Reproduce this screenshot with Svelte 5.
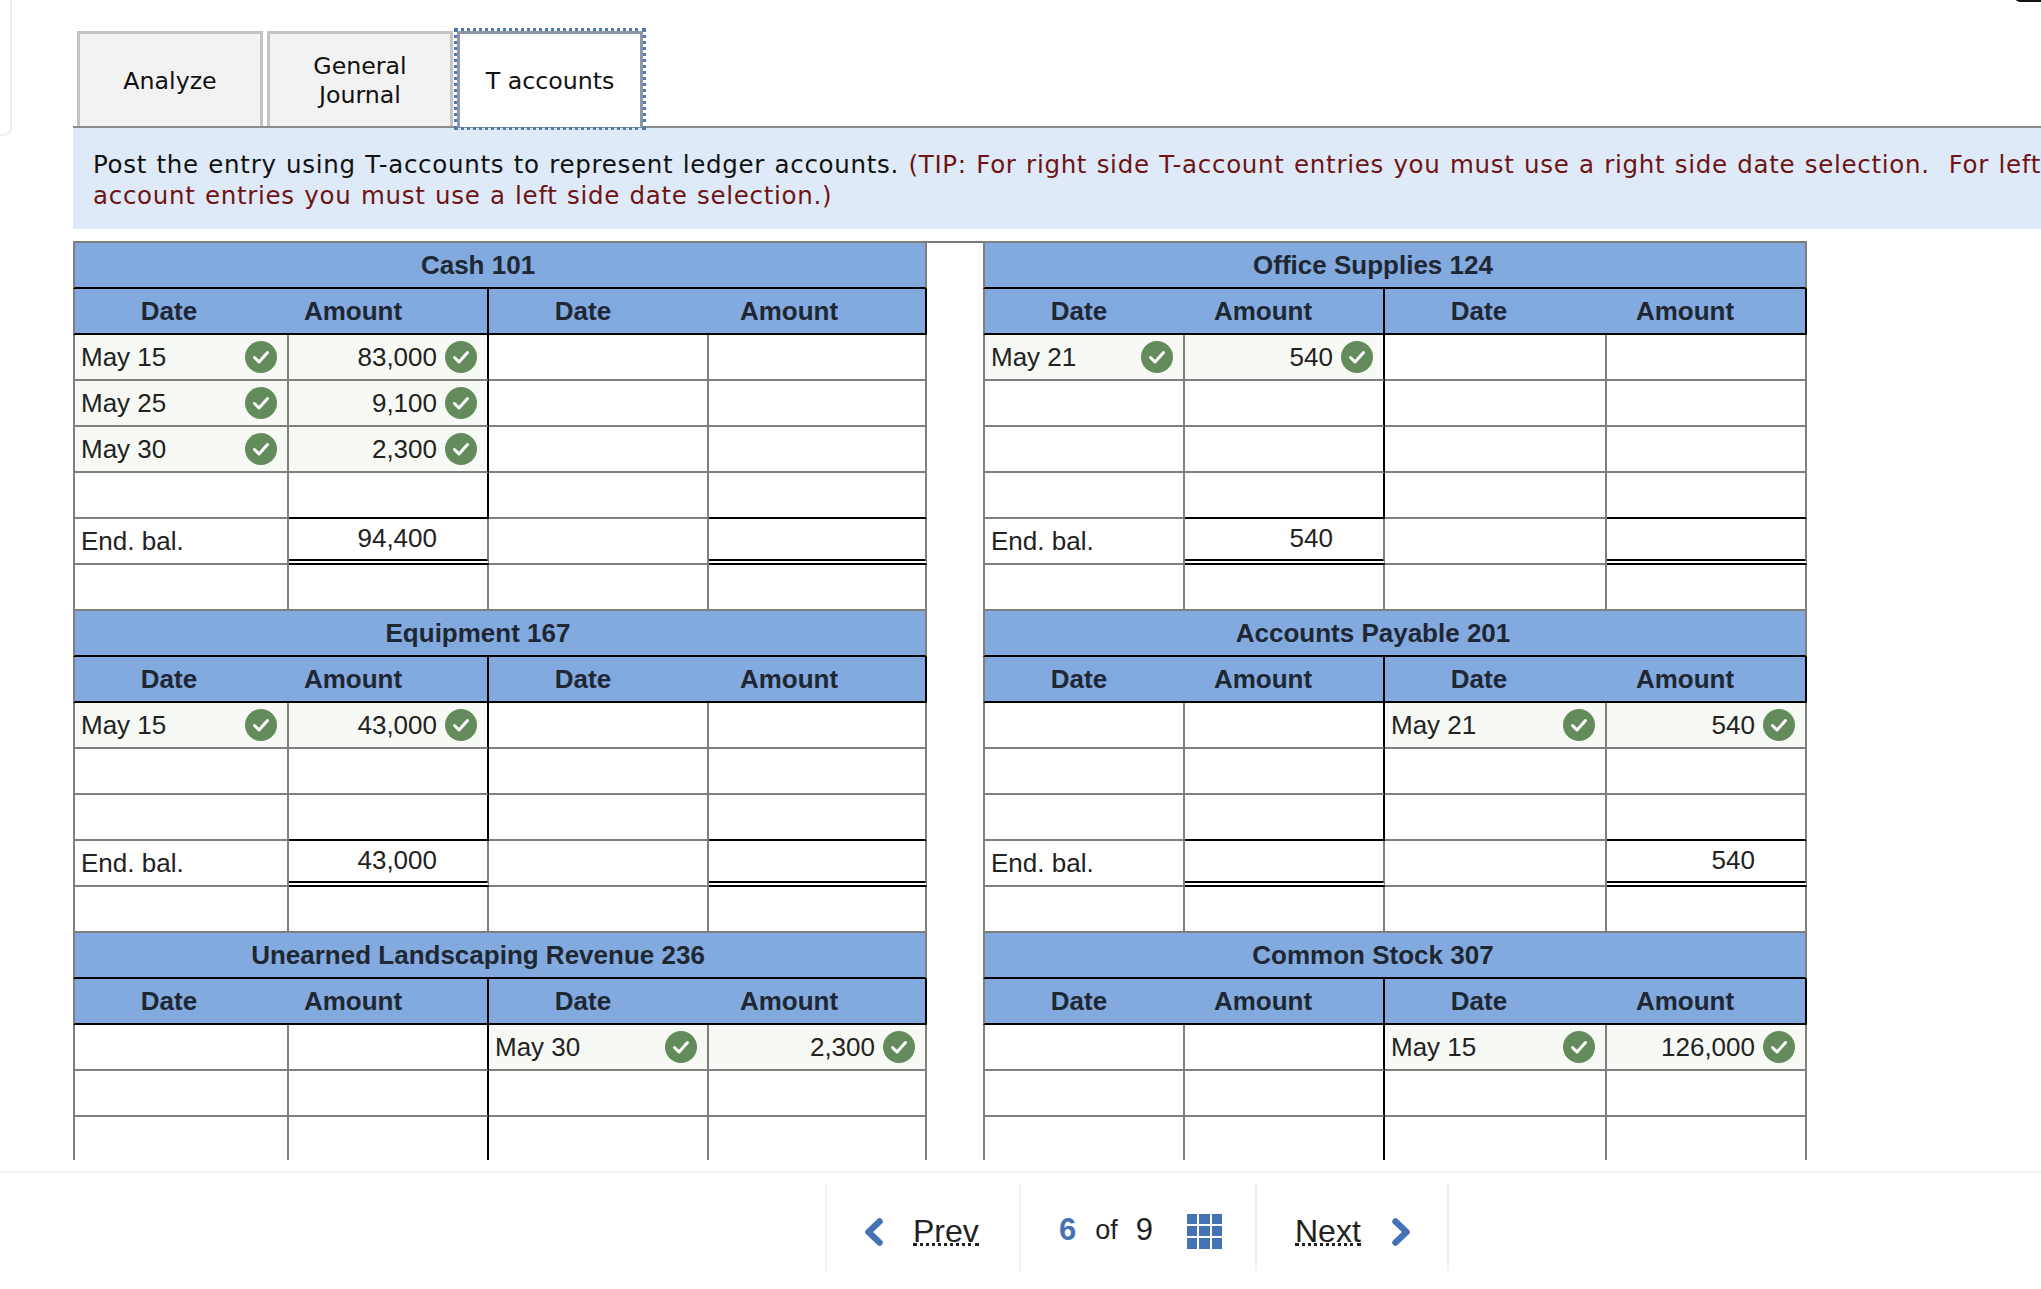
<script>
    const tabs = ["Analyze", "General Journal", "T accounts"];
    const heads = ["Date", "Amount", "Date", "Amount"];

    const left = [
        {
            title: "Cash 101",
            count: 4,
            entries: [
                { side: 0, date: "May 15", amount: "83,000" },
                { side: 0, date: "May 25", amount: "9,100" },
                { side: 0, date: "May 30", amount: "2,300" },
            ],
            end: ["94,400", ""],
        },
        {
            title: "Equipment 167",
            count: 3,
            entries: [{ side: 0, date: "May 15", amount: "43,000" }],
            end: ["43,000", ""],
        },
        {
            title: "Unearned Landscaping Revenue 236",
            count: 3,
            entries: [{ side: 1, date: "May 30", amount: "2,300" }],
            end: null,
        },
    ];

    const right = [
        {
            title: "Office Supplies 124",
            count: 4,
            entries: [{ side: 0, date: "May 21", amount: "540" }],
            end: ["540", ""],
        },
        {
            title: "Accounts Payable 201",
            count: 3,
            entries: [{ side: 1, date: "May 21", amount: "540" }],
            end: ["", "540"],
        },
        {
            title: "Common Stock 307",
            count: 3,
            entries: [{ side: 1, date: "May 15", amount: "126,000" }],
            end: null,
        },
    ];

    // entries fill the rows from the top, the rest stay blank
    function rowsOf(account) {
        const rows = [];
        for (let i = 0; i < account.count; i++) {
            rows.push(account.entries[i] ?? null);
        }
        return rows;
    }
</script>

{#snippet check()}
    <svg class="check" viewBox="0 0 32 32" width="32" height="32">
        <circle cx="16" cy="16" r="16" fill="#648b5c" />
        <path d="M9.5 16.5 L14 21 L22.5 11.5" fill="none" stroke="#fff" stroke-width="3" stroke-linecap="round" stroke-linejoin="round" />
    </svg>
{/snippet}

{#snippet ledger(accounts, cls, widths)}
    <table class={"ledger " + cls}>
        <colgroup>
            {#each widths as w}
                <col style="width: {w}px" />
            {/each}
        </colgroup>
        <tbody>
            {#each accounts as account}
                <tr>
                    <th class="title" colspan="4">{account.title}</th>
                </tr>
                <tr>
                    {#each heads as head, i}
                        <th class={"head h" + i}>{head}</th>
                    {/each}
                </tr>
                {#each rowsOf(account) as entry, r}
                    {@const last = r === account.count - 1}
                    <tr class:last-entry={last && account.end}>
                        {#each [0, 1] as side}
                            {#if entry && entry.side === side}
                                <td class="cell ok">
                                    <div class="date-wrap"><span>{entry.date}</span>{@render check()}</div>
                                </td>
                                <td class="cell amount ok" class:mid={side === 0}>
                                    <div class="amount-wrap"><span>{entry.amount}</span>{@render check()}</div>
                                </td>
                            {:else}
                                <td class="cell"></td>
                                <td class="cell amount" class:mid={side === 0}></td>
                            {/if}
                        {/each}
                    </tr>
                {/each}
                {#if account.end}
                    <tr>
                        <td class="cell label">End. bal.</td>
                        <td class="cell amount total"><div class="total-val">{account.end[0]}</div></td>
                        <td class="cell"></td>
                        <td class="cell amount total"><div class="total-val">{account.end[1]}</div></td>
                    </tr>
                    <tr>
                        <td class="cell"></td>
                        <td class="cell amount"></td>
                        <td class="cell"></td>
                        <td class="cell amount"></td>
                    </tr>
                {/if}
            {/each}
        </tbody>
    </table>
{/snippet}

<div class="page">
    <div class="side-card"></div>
    <div class="corner-mark"></div>

    <div class="tabs">
        {#each tabs as tab, i}
            <button class="tab" class:active={i === 2}>{tab}</button>
        {/each}
    </div>

    <div class="notice">
        Post the entry using T-accounts to represent ledger accounts.
        <span class="tip">(TIP: For right side T-account entries you must use a right side date selection.&nbsp; For left</span><br />
        <span class="tip">account entries you must use a left side date selection.)</span>
    </div>

    <div class="ledgers">
        {@render ledger(left, "left", [216, 200, 220, 218])}
        <div class="ledger-gap"></div>
        {@render ledger(right, "right", [202, 200, 222, 200])}
    </div>

    <div class="footer">
        <div class="nav-part prev">
            <svg class="chev" viewBox="0 0 20 28" width="20" height="28">
                <path d="M15.5 3.5 L4.5 14 L15.5 24.5" fill="none" stroke="#4472b2" stroke-width="6.5" stroke-linecap="round" stroke-linejoin="round" />
            </svg>
            <span class="nav-link">Prev</span>
        </div>
        <div class="nav-part pages">
            <span class="current">6</span>
            <span class="of">of</span>
            <span class="total-pages">9</span>
            <div class="grid-icon">
                {#each Array(9) as _}
                    <i></i>
                {/each}
            </div>
        </div>
        <div class="nav-part next">
            <span class="nav-link">Next</span>
            <svg class="chev" viewBox="0 0 20 28" width="20" height="28">
                <path d="M4.5 3.5 L15.5 14 L4.5 24.5" fill="none" stroke="#4472b2" stroke-width="6.5" stroke-linecap="round" stroke-linejoin="round" />
            </svg>
        </div>
    </div>
</div>

<style>
    :global(body) {
        margin: 0;
        background: #fff;
    }

    .page {
        position: relative;
        width: 2041px;
        height: 1289px;
        overflow: hidden;
        font-family: "Liberation Sans", Arial, sans-serif;
        color: #222;
    }

    .side-card {
        position: absolute;
        left: -20px;
        top: -20px;
        width: 28px;
        height: 152px;
        border: 2px solid #f0f0f0;
        border-radius: 8px;
    }

    .corner-mark {
        position: absolute;
        right: 0;
        top: -6px;
        width: 26px;
        height: 8px;
        background: #111;
        border-radius: 0 0 0 5px;
    }

    .tabs {
        display: flex;
        align-items: flex-end;
        gap: 4px;
        height: 126px;
        padding-left: 77px;
        box-sizing: border-box;
        padding-top: 31px;
    }

    .tab {
        width: 186px;
        height: 95px;
        box-sizing: border-box;
        padding: 2px 20px 0;
        border: 3px solid #c4c4c4;
        border-bottom: 0;
        background: #f2f2f2;
        color: #111;
        font-family: "DejaVu Sans", sans-serif;
        font-size: 23.7px;
        line-height: 29px;
        text-align: center;
    }

    .tab.active {
        position: relative;
        z-index: 1;
        background: #fff;
        border-color: #8d97a8;
        outline: 3px dotted #4f78b5;
        outline-offset: 0;
        height: 96px;
        margin-bottom: -1px;
    }

    .notice {
        margin-left: 73px;
        height: 103px;
        box-sizing: border-box;
        border-top: 2px solid #8c8c8c;
        padding: 21px 0 0 20px;
        background: #deeaf7;
        color: #111;
        font-family: "DejaVu Sans", sans-serif;
        font-size: 24.5px;
        letter-spacing: 0.7px;
        word-spacing: 1px;
        line-height: 31px;
        white-space: nowrap;
        overflow: hidden;
    }

    .tip {
        color: #6e1414;
    }

    .ledgers {
        display: flex;
        margin: 12px 0 0 73px;
        height: 919px;
        overflow: hidden;
        align-items: flex-start;
    }

    .ledger-gap {
        flex: none;
        width: 56px;
        border-top: 2px solid #7a7a7a;
    }

    .ledger {
        flex: none;
        border-collapse: separate;
        border-spacing: 0;
        table-layout: fixed;
        font-size: 26px;
    }

    .ledger.left {
        width: 854px;
    }

    .ledger.right {
        width: 824px;
    }

    th {
        background: #82aadf;
        color: #1f2733;
        font-weight: 700;
        box-sizing: border-box;
        padding: 0;
    }

    .title {
        height: 46px;
        border-left: 2px solid #7f7f7f;
        border-right: 2px solid #7f7f7f;
        border-bottom: 2px solid #000;
        padding-right: 44px;
    }

    tr:first-child .title {
        height: 48px;
        border-top: 2px solid #7f7f7f;
    }

    .head {
        height: 46px;
        border-bottom: 2px solid #000;
    }

    .h0 {
        border-left: 2px solid #7f7f7f;
    }

    .h1,
    .h3 {
        border-right: 2px solid #000;
    }

    .left .h0 {
        padding-right: 26px;
    }

    .left .h1 {
        padding-right: 70px;
    }

    .left .h2 {
        padding-right: 32px;
    }

    .left .h3 {
        padding-right: 56px;
    }

    .right .h0 {
        padding-right: 12px;
    }

    .right .h1 {
        padding-right: 42px;
    }

    .right .h2 {
        padding-right: 34px;
    }

    .right .h3 {
        padding-right: 42px;
    }

    .cell {
        height: 46px;
        box-sizing: border-box;
        padding: 0;
        border-right: 2px solid #7f7f7f;
        border-bottom: 2px solid #7f7f7f;
    }

    tr > .cell:first-child {
        border-left: 2px solid #7f7f7f;
    }

    .cell.ok {
        background: #f6f9f4;
    }

    .cell.mid {
        border-right-color: #000;
    }

    .last-entry .amount {
        border-bottom-color: #000;
    }

    .date-wrap,
    .amount-wrap {
        display: flex;
        align-items: center;
        height: 44px;
        padding-right: 10px;
    }

    .date-wrap {
        justify-content: space-between;
        padding-left: 6px;
    }

    .amount-wrap {
        justify-content: flex-end;
        gap: 8px;
    }

    .check {
        flex: none;
    }

    .label {
        padding-left: 6px;
    }

    .total {
        border-bottom: 6px double #000;
    }

    .total-val {
        text-align: right;
        padding-right: 50px;
        line-height: 39px;
        height: 40px;
    }

    .footer {
        display: flex;
        margin-top: 11px;
        padding: 10px 0 0 825px;
        border-top: 2px solid #f2f2f2;
    }

    .nav-part {
        display: flex;
        align-items: center;
        height: 88px;
        box-sizing: border-box;
        border-left: 2px solid #f2f2f2;
        padding-top: 5px;
    }

    .prev {
        width: 194px;
        padding-left: 37px;
        gap: 29px;
    }

    .pages {
        width: 236px;
        padding-left: 38px;
        padding-top: 6px;
    }

    .next {
        width: 194px;
        padding-left: 38px;
        gap: 30px;
        border-right: 2px solid #f2f2f2;
    }

    .nav-link {
        font-size: 32px;
        line-height: 36px;
        border-bottom: 3px dotted #222;
        height: 30px;
    }

    .chev {
        flex: none;
        margin-top: 4px;
    }

    .current {
        font-size: 31px;
        font-weight: 700;
        color: #4472b2;
    }

    .of {
        font-size: 27px;
        margin-left: 19px;
    }

    .total-pages {
        font-size: 31px;
        margin-left: 18px;
    }

    .grid-icon {
        display: grid;
        grid-template-columns: repeat(3, 1fr);
        gap: 2px;
        width: 35px;
        height: 35px;
        margin-left: 34px;
        margin-top: 2px;
    }

    .grid-icon i {
        background: #4472b2;
    }
</style>
